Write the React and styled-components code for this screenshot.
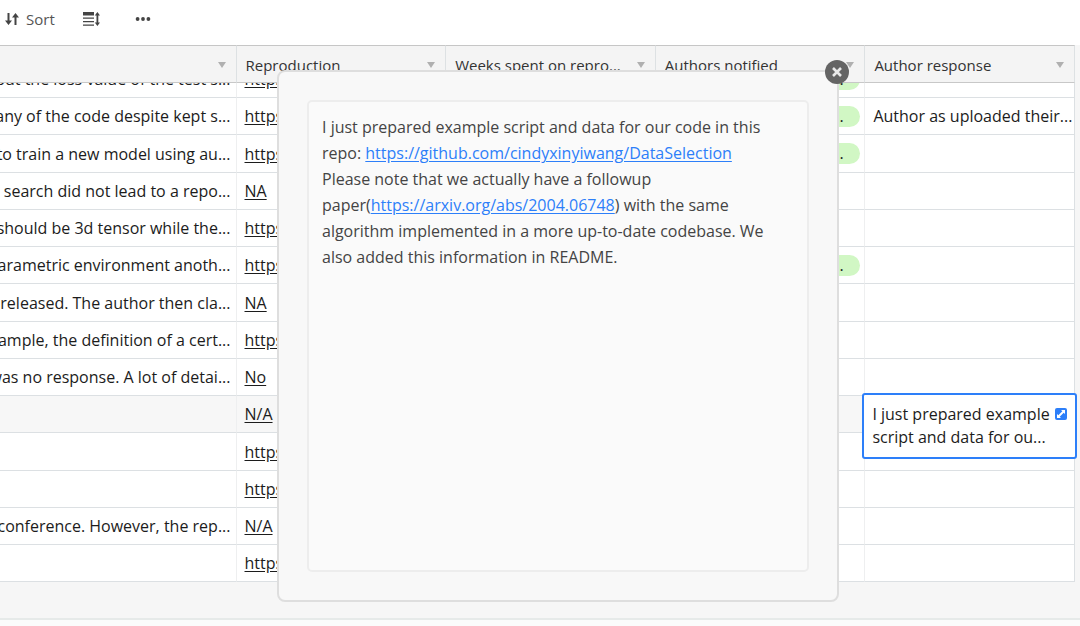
import styled, { createGlobalStyle, css } from 'styled-components';

const rows = [
    { issue: 'but the loss value of the test s...', link: 'https://', notified: true, cut: true },
    { issue: 'any of the code despite kept s...', link: 'https://', notified: true, response: 'Author as uploaded their...' },
    { issue: 'to train a new model using au...', link: 'https://', notified: true },
    { issue: 'search did not lead to a repo...', link: 'NA' },
    { issue: 'should be 3d tensor while the...', link: 'https://' },
    { issue: 'parametric environment anoth...', link: 'https://', notified: true },
    { issue: 't released. The author then cla...', link: 'NA' },
    { issue: 'ample, the definition of a cert...', link: 'https://' },
    { issue: 'was no response. A lot of detai...', link: 'No' },
    { issue: '', link: 'N/A', active: true, selected: true },
    { issue: '', link: 'https://' },
    { issue: '', link: 'https://' },
    { issue: 'conference. However, the rep...', link: 'N/A' },
    { issue: '', link: 'https://' },
];

const headers = ['', 'Reproduction', 'Weeks spent on repro...', 'Authors notified', 'Author response'];

function Toolbar () {
    return (
        <Bar>
            <SortButton>
                <svg width="14" height="14" viewBox="0 0 14 14" fill="none" stroke="#444" strokeWidth="2">
                    <path d="M3.5 1v9M10.5 13V4" />
                    <path d="M0 8.6h7L3.5 13zM7 5.4h7L10.5 1z" fill="#444" stroke="none" />
                </svg>
                Sort
            </SortButton>
            <IconButton aria-label="Row height">
                <svg width="18" height="16" viewBox="0 0 18 16" fill="#444">
                    <path d="M0 1h11v3.5H0zM0 6.5h11v1.2H0zM0 10h11v1.2H0zM0 13.5h11v1.2H0z" />
                    <path d="M11.8 4.4 14.4 1 17 4.4h-1.7v7.2H17L14.4 15l-2.6-3.4h1.7V4.4z" />
                </svg>
            </IconButton>
            <IconButton aria-label="More">
                <svg width="16" height="4" viewBox="0 0 16 4" fill="#444">
                    <circle cx="2.6" cy="2" r="1.9" />
                    <circle cx="8" cy="2" r="1.9" />
                    <circle cx="13.4" cy="2" r="1.9" />
                </svg>
            </IconButton>
        </Bar>
    )
}

function Row ({ issue, link, notified, response, cut, active, selected }) {
    return (
        <Tr $active={active}>
            <Td>
                <CellBody $cut={cut} $end>
                    <Text>{issue}</Text>
                </CellBody>
            </Td>
            <Td>
                <CellBody $cut={cut}>
                    <Text><CellLink href="#">{link}</CellLink></Text>
                </CellBody>
            </Td>
            <Td />
            <Td>
                <CellBody $cut={cut}>
                    {notified && <Text><Pill>...</Pill></Text>}
                </CellBody>
            </Td>
            <Td>
                <CellBody $cut={cut}>
                    {response && <Text>{response}</Text>}
                </CellBody>
                {selected && (
                    <SelectedCell>
                        <span>I just prepared example script and data for ou...</span>
                        <ExpandButton aria-label="Expand">
                            <svg width="12" height="12" viewBox="0 0 12 12" fill="#fff">
                                <path d="M6 2h4v4L8.7 4.7 4.7 8.7 6 10H2V6l1.3 1.3 4-4z" />
                            </svg>
                        </ExpandButton>
                    </SelectedCell>
                )}
            </Td>
        </Tr>
    )
}

function Popup () {
    return (
        <Dialog role="dialog" aria-label="Author response">
            <Close aria-label="Close">
                <svg width="10" height="10" viewBox="0 0 10 10" stroke="#e8e8e8" strokeWidth="2.6">
                    <path d="M1 1l8 8M9 1L1 9" />
                </svg>
            </Close>
            <Note>
                I just prepared example script and data for our code in this
                <br />
                repo: <a href="https://github.com/cindyxinyiwang/DataSelection">https://github.com/cindyxinyiwang/DataSelection</a>
                <br />
                Please note that we actually have a followup
                <br />
                paper(<a href="https://arxiv.org/abs/2004.06748">https://arxiv.org/abs/2004.06748</a>) with the same
                <br />
                algorithm implemented in a more up-to-date codebase. We
                <br />
                also added this information in README.
            </Note>
        </Dialog>
    )
}

function App () {
    return (
        <Page>
            <GlobalStyle />
            <Toolbar />
            <GridArea>
                <Table>
                    <thead>
                        <tr>
                            {headers.map((name, i) => (
                                <Th key={i} $first={i === 0}>
                                    <HeaderBody>
                                        <span>{name}</span>
                                        <Caret width="8" height="6" viewBox="0 0 8 6">
                                            <path d="M0 0h8L4 6z" />
                                        </Caret>
                                    </HeaderBody>
                                </Th>
                            ))}
                        </tr>
                    </thead>
                    <tbody>
                        {rows.map((row, i) => <Row key={i} {...row} />)}
                    </tbody>
                </Table>
            </GridArea>
            <Footer />
            <Popup />
        </Page>
    )
}

export default App;

const GlobalStyle = createGlobalStyle`
    * {
        box-sizing: border-box;
    }

    body {
        margin: 0;
        font-family: 'Open Sans', 'Noto Sans', sans-serif;
        font-size: 16px;
        color: #1c1c1c;
        background: #fff;
    }

    button {
        padding: 0;
        border: 0;
        background: none;
        font: inherit;
        color: inherit;
        cursor: pointer;
    }
`

const Page = styled.div`
    position: relative;
    display: flex;
    flex-direction: column;
    min-height: 100vh;
    overflow: hidden;
`

const Bar = styled.div`
    display: flex;
    align-items: center;
    gap: 28px;
    height: 45px;
    padding: 0 5px 7px;
`

const SortButton = styled.button`
    display: flex;
    align-items: center;
    gap: 7px;

    && {
        font-size: 15px;
        color: #555;
    }
`

const IconButton = styled.button`
    display: flex;
    margin-right: 6px;
`

const GridArea = styled.div`
    flex: 1;
    background: #f6f6f6;
`

const Table = styled.table`
    width: calc(100% - 5px);
    table-layout: fixed;
    border-collapse: separate;
    border-spacing: 0;
`

const Th = styled.th`
    width: ${props => props.$first ? '22%' : 'auto'};
    padding: 0;
    border-top: 1px solid #c6c6c6;
    border-bottom: 1px solid #c8c8c8;
    border-right: 1px solid #dde1e3;
    background: #f4f4f4;
    font-size: 15px;
    font-weight: 400;
    color: #333;
`

const HeaderBody = styled.div`
    display: flex;
    align-items: center;
    justify-content: space-between;
    height: 36px;
    padding: 2px 10px 0 9px;
    white-space: nowrap;
`

const Caret = styled.svg`
    fill: #b0b0b0;
`

const Tr = styled.tr`
    background: ${props => props.$active ? '#f7f7f7' : '#fff'};

    &:nth-child(4n + 3) > td {
        height: 38px;
    }
`

const Td = styled.td`
    position: relative;
    padding: 0;
    border-bottom: 1px solid #dce0e3;
    border-right: 1px solid #eeeff0;

    &:last-child {
        border-right-color: #dce0e3;
    }
`

const CellBody = styled.div`
    display: flex;
    align-items: center;
    justify-content: flex-start;
    height: 36px;
    padding: 0 5px 0 8px;
    overflow: hidden;
    white-space: nowrap;

    ${
        props => props.$end && css`
            justify-content: flex-end;
            padding-left: 0;
        `
    }

    ${
        props => props.$cut && css`
            align-items: flex-end;
            height: 14px;
        `
    }
`

const Text = styled.div`
    display: flex;
    align-items: center;
    flex: none;
    height: 36px;
`

const CellLink = styled.a`
    color: inherit;
    text-underline-offset: 2px;
`

const Pill = styled.span`
    width: 196px;
    height: 21px;
    padding-right: 16px;
    border-radius: 11px;
    background: #d1f7c4;
    line-height: 21px;
    text-align: right;
`

const SelectedCell = styled.div`
    position: absolute;
    top: -3px;
    left: -3px;
    right: -3px;
    z-index: 1;
    display: flex;
    align-items: flex-start;
    justify-content: space-between;
    gap: 2px;
    height: 66px;
    padding: 8px;
    border: 2px solid #2d7ff9;
    border-radius: 3px;
    background: #fff;
    line-height: 23px;
`

const ExpandButton = styled.button`
    display: flex;
    flex: none;
    margin-top: 5px;

    && {
        border-radius: 2px;
        background: #2d7ff9;
    }
`

const Footer = styled.div`
    height: 8px;
    border-top: 2px solid #e6eae9;
    background: #fbfbfb;
`

const Dialog = styled.div`
    position: absolute;
    top: 70px;
    left: 277px;
    right: 241px;
    bottom: 24px;
    z-index: 2;
    display: flex;
    padding: 28px;
    border: 2px solid #dedede;
    border-radius: 8px;
    background: #f8f8f8;
`

const Close = styled.button`
    position: absolute;
    top: -12px;
    right: -12px;
    display: flex;
    align-items: center;
    justify-content: center;
    width: 24px;
    height: 24px;

    && {
        border-radius: 50%;
        background: #646464;
    }
`

const Note = styled.div`
    flex: 1;
    padding: 12px 13px;
    border: 2px solid #ededed;
    border-radius: 5px;
    background: #fafafa;
    line-height: 26px;
    color: #444;

    a {
        color: #2d7ff9;
        text-underline-offset: 2px;
    }
`
